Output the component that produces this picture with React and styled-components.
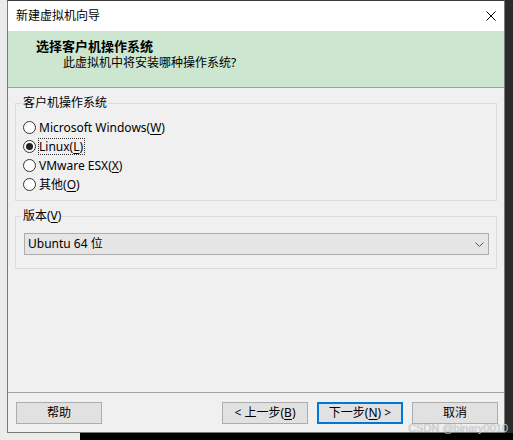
import React from "react";
import styled, { createGlobalStyle } from "styled-components";

const GlobalStyle = createGlobalStyle`
  html, body {
    margin: 0;
    padding: 0;
  }
  body {
    background: #000;
    font-family: "Noto Sans", "Noto Sans CJK SC", sans-serif;
    font-size: 12px;
    color: #000;
  }
  * {
    box-sizing: border-box;
  }
`;

const Desktop = styled.div`
  position: relative;
  width: 513px;
  height: 440px;
  overflow: hidden;
  background:
    linear-gradient(#2b2b2b, #2b2b2b) right top / 8px 433px no-repeat,
    linear-gradient(to right, #ececec 80px, #000 80px);
`;

const Window = styled.div`
  margin-left: 7px;
  width: 498px;
  height: 433px;
  display: flex;
  flex-direction: column;
  background: #f0f0f0;
  border: 1px solid #7a7a7a;
  border-top-color: #3c3c3c;
`;

const TitleBar = styled.div`
  height: 30px;
  flex: none;
  display: flex;
  align-items: center;
  justify-content: space-between;
  padding: 0 8px;
  background: #fff;
  line-height: 16px;
`;

const Header = styled.div`
  height: 57px;
  flex: none;
  padding: 6px 0 0 28px;
  background: #cce6d0;
  border-bottom: 1px solid #a0a0a0;
`;

const HeaderTitle = styled.div`
  font-size: 13px;
  font-weight: bold;
  line-height: 18px;
`;

const HeaderSub = styled.div`
  margin-left: 27px;
  line-height: 16px;
`;

const Content = styled.div`
  flex: 1;
  padding: 0 7px;
`;

const Group = styled.fieldset`
  margin: 7px 0 0;
  padding: ${(p) => p.$pad};
  min-width: 0;
  border: 1px solid #dcdcdc;
`;

const Legend = styled.legend`
  padding: 0 1px;
  line-height: 16px;
`;

const RadioList = styled.div`
  display: flex;
  flex-direction: column;
`;

const RadioRow = styled.div`
  display: flex;
  align-items: center;
  height: 19px;
`;

const RadioCircle = styled.span`
  width: 13px;
  height: 13px;
  margin: 0 2px 0 1px;
  flex: none;
  display: flex;
  align-items: center;
  justify-content: center;
  border: 1px solid #333;
  border-radius: 50%;
  background: #fff;

  &::after {
    content: "";
    display: ${(p) => (p.$checked ? "block" : "none")};
    width: 7px;
    height: 7px;
    border-radius: 50%;
    background: #222;
  }
`;

const RadioText = styled.span`
  line-height: 15px;
  border: 1px dotted ${(p) => (p.$focused ? "#333" : "transparent")};
  padding-right: 1px;
`;

const Key = styled.u`
  text-underline-offset: 2px;
`;

const Select = styled.div`
  height: 22px;
  margin: 0 1px 0 2px;
  display: flex;
  align-items: center;
  justify-content: space-between;
  padding: 0 4px 0 3px;
  background: #e5e5e5;
  border: 1px solid #adadad;
  line-height: 16px;
`;

const Footer = styled.div`
  height: 40px;
  flex: none;
  display: flex;
  align-items: flex-start;
  gap: 9px;
  padding: 9px 6px 0 8px;
  border-top: 1px solid #a0a0a0;
`;

const Spacer = styled.div`
  flex: 1;
`;

const Button = styled.button`
  width: 86px;
  height: 22px;
  padding: 0;
  font-family: inherit;
  font-size: 12px;
  line-height: 16px;
  color: #000;
  background: #e1e1e1;
  border: ${(p) => (p.$primary ? "2px solid #0078d7" : "1px solid #adadad")};
  border-radius: 0;
`;

const Watermark = styled.div`
  position: absolute;
  right: 5px;
  bottom: 5px;
  font-family: "Liberation Sans", sans-serif;
  font-size: 11px;
  line-height: 13px;
  color: rgba(225, 225, 225, 0.85);
  text-shadow: 0 0 1px rgba(0, 0, 0, 0.35);
`;

const osOptions = [
  { label: "Microsoft Windows", key: "W" },
  { label: "Linux", key: "L", checked: true },
  { label: "VMware ESX", key: "X" },
  { label: "其他", key: "O" },
];

function CloseIcon() {
  return (
    <svg width="10" height="10" viewBox="0 0 10 10">
      <path d="M0.5 0.5 L9.5 9.5 M9.5 0.5 L0.5 9.5" stroke="#000" strokeWidth="1" fill="none" />
    </svg>
  );
}

function Chevron() {
  return (
    <svg width="9" height="5" viewBox="0 0 9 5">
      <polyline points="0.5,0.5 4.5,4.5 8.5,0.5" stroke="#555" strokeWidth="1" fill="none" />
    </svg>
  );
}

export default function App() {
  return (
    <Desktop>
      <GlobalStyle />
      <Window>
        <TitleBar>
          <span>新建虚拟机向导</span>
          <CloseIcon />
        </TitleBar>
        <Header>
          <HeaderTitle>选择客户机操作系统</HeaderTitle>
          <HeaderSub>此虚拟机中将安装哪种操作系统?</HeaderSub>
        </Header>
        <Content>
          <Group $pad="7px 6px 6px">
            <Legend>客户机操作系统</Legend>
            <RadioList>
              {osOptions.map((o) => (
                <RadioRow key={o.key}>
                  <RadioCircle $checked={o.checked} />
                  <RadioText $focused={o.checked}>
                    {o.label}(<Key>{o.key}</Key>)
                  </RadioText>
                </RadioRow>
              ))}
            </RadioList>
          </Group>
          <Group $pad="9px 6px 13px">
            <Legend>
              版本(<Key>V</Key>)
            </Legend>
            <Select>
              <span>Ubuntu 64 位</span>
              <Chevron />
            </Select>
          </Group>
        </Content>
        <Footer>
          <Button>帮助</Button>
          <Spacer />
          <Button>
            &lt; 上一步(<Key>B</Key>)
          </Button>
          <Button $primary>
            下一步(<Key>N</Key>) &gt;
          </Button>
          <Button>取消</Button>
        </Footer>
      </Window>
      <Watermark>CSDN @binary0010</Watermark>
    </Desktop>
  );
}
